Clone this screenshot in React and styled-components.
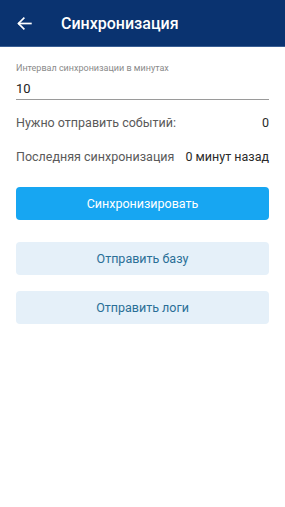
import React from 'react'
import styled, { createGlobalStyle } from 'styled-components'

const GlobalStyle = createGlobalStyle`
  body {
    margin: 0;
    background: #ffffff;
    font-family: Roboto, "Noto Sans", sans-serif;
  }
`

const Screen = styled.div`
  width: 285px;
  min-height: 507px;
  background: #ffffff;
  display: flex;
  flex-direction: column;
`

const TopBar = styled.header`
  height: 46px;
  background: #0a3370;
  border-bottom: 1px solid #3a5f94;
  display: flex;
  align-items: center;
  padding: 0 16px;
  gap: 28px;
  color: #ffffff;
`

const BackButton = styled.button`
  border: 0;
  background: none;
  padding: 0;
  width: 17px;
  height: 17px;
  display: flex;
  color: #ffffff;
`

const Title = styled.h1`
  margin: 0;
  font-size: 16px;
  font-weight: 500;
`

const Content = styled.main`
  display: flex;
  flex-direction: column;
  padding: 15px 16px 0;
`

const Field = styled.label`
  display: flex;
  flex-direction: column;
  border-bottom: 1px solid #9a9a9a;
  padding-bottom: 1px;
`

const FieldLabel = styled.span`
  font-size: 9px;
  color: #8a8a8a;
  line-height: 12px;
`

const FieldValue = styled.span`
  font-size: 13px;
  color: #222222;
  line-height: 18px;
  margin-top: 6px;
`

const InfoRow = styled.div`
  display: flex;
  justify-content: space-between;
  font-size: 12.5px;
  line-height: 16px;
  margin-top: ${p => p.$top}px;
`

const InfoLabel = styled.span`
  color: #5a5a5a;
`

const InfoValue = styled.span`
  color: #2a2a2a;
`

const Button = styled.button`
  height: 33px;
  border: 0;
  border-radius: 4px;
  font-family: inherit;
  font-size: 12.5px;
  margin-top: ${p => p.$top}px;
  background: ${p => (p.$primary ? '#17a6f2' : '#e5f0f9')};
  color: ${p => (p.$primary ? '#ffffff' : '#2a6f97')};
`

const App = () => (
  <Screen>
    <GlobalStyle />
    <TopBar>
      <BackButton aria-label="Назад">
        <svg width="17" height="17" viewBox="0 0 24 24" fill="none" stroke="currentColor" strokeWidth="2.4" strokeLinecap="square">
          <path d="M21 12H4" />
          <path d="M11 4.5 3.5 12l7.5 7.5" />
        </svg>
      </BackButton>
      <Title>Синхронизация</Title>
    </TopBar>
    <Content>
      <Field>
        <FieldLabel>Интервал синхронизации в минутах</FieldLabel>
        <FieldValue>10</FieldValue>
      </Field>
      <InfoRow $top={15}>
        <InfoLabel>Нужно отправить событий:</InfoLabel>
        <InfoValue>0</InfoValue>
      </InfoRow>
      <InfoRow $top={18}>
        <InfoLabel>Последняя синхронизация</InfoLabel>
        <InfoValue>0 минут назад</InfoValue>
      </InfoRow>
      <Button $primary $top={22}>Синхронизировать</Button>
      <Button $top={22}>Отправить базу</Button>
      <Button $top={16}>Отправить логи</Button>
    </Content>
  </Screen>
)

export default App
